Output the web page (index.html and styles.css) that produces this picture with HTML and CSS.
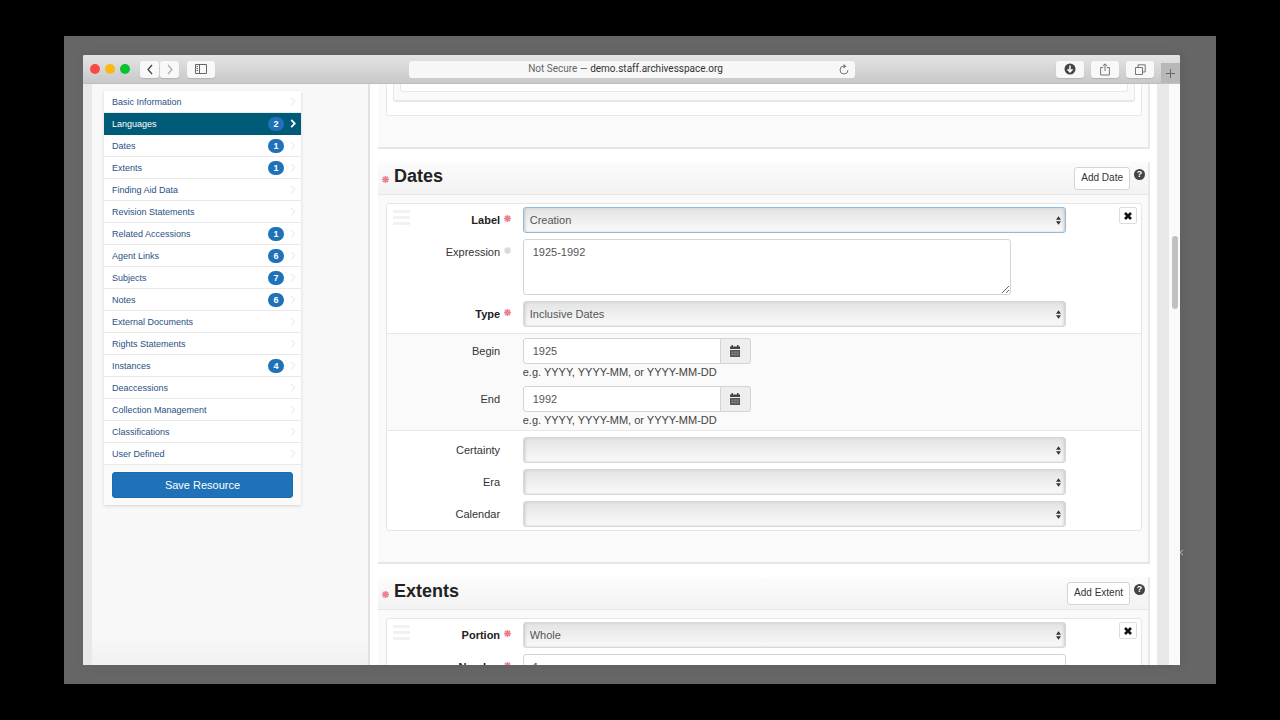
FILE: index.html
```html
<!DOCTYPE html>
<html lang="en">
<head>
    <meta charset="UTF-8">
    <meta name="viewport" content="width=device-width, initial-scale=1.0">
    <title>ArchivesSpace - Edit Resource</title>
    <link rel="stylesheet" href="styles.css">
</head>
<body>
    <!-- shared icons -->
    <svg class="sprite" aria-hidden="true">
        <symbol id="chevron" viewBox="0 0 6 10"><path d="M1 1l4 4-4 4" fill="none" stroke="currentColor"/></symbol>
        <symbol id="required" viewBox="0 0 10 10"><path d="M5 1v8M1 5h8M2.2 2.2l5.6 5.6M7.8 2.2L2.2 7.8" stroke="currentColor" stroke-width="1.8"/></symbol>
        <symbol id="updown" viewBox="0 0 6 10"><path d="M0 4l3-4 3 4zM0 6l3 4 3-4z" fill="currentColor"/></symbol>
        <symbol id="calendar" viewBox="0 0 12 12"><path d="M1 1.5h1.5V0h1.5v1.5h4V0h1.5v1.5H11V4H1z" fill="#444"/><path d="M1 5h10v7H1z" fill="#555"/><path d="M2 7.2h8M2 9.5h8M3.5 6v5M6 6v5M8.5 6v5" stroke="#999" stroke-width=".5"/></symbol>
        <symbol id="remove" viewBox="0 0 10 10"><path d="M2 2l6 6M8 2L2 8" stroke="#111" stroke-width="2.6"/></symbol>
    </svg>

    <div class="desktop">
        <div class="window">
            <header class="toolbar">
                <div class="toolbar-left">
                    <span class="dot red"></span>
                    <span class="dot yellow"></span>
                    <span class="dot green"></span>
                    <button class="tool nav-btn back" aria-label="Back"><svg width="6" height="11" viewBox="0 0 6 11"><path d="M5 1L1 5.500l4 4.500" fill="none" stroke="#444" stroke-width="1.300"/></svg></button>
                    <button class="tool nav-btn" aria-label="Forward"><svg width="6" height="11" viewBox="0 0 6 11"><path d="M1 1l4 4.500L1 10" fill="none" stroke="#aaa" stroke-width="1.200"/></svg></button>
                    <button class="tool side-btn" aria-label="Show sidebar"><svg width="12" height="10" viewBox="0 0 12 10"><path d="M.5.5h11v9H.5zM4.500.5v9M1.500 2.500h1.500M1.500 4.500h1.500M1.500 6.500h1.500" fill="none" stroke="#555" stroke-width=".9"/></svg></button>
                </div>
                <div class="address">
                    <span class="address-text">Not Secure — <b>demo.staff.archivesspace.org</b></span>
                    <svg class="reload" width="10" height="11" viewBox="0 0 10 11"><path d="M5 2a4 4 0 1 0 4 4" fill="none" stroke="#777"/><path d="M4.500 0l3 2.200-3 2.200z" fill="#777"/></svg>
                </div>
                <div class="toolbar-right">
                    <button class="tool" aria-label="Downloads"><svg width="12" height="12" viewBox="0 0 12 12"><circle cx="6" cy="6" r="5.500" fill="#444"/><path d="M6 2.500v6M3.500 6.200L6 8.800l2.500-2.600" fill="none" stroke="#fff" stroke-width="1.500"/></svg></button>
                    <button class="tool" aria-label="Share"><svg width="10" height="13" viewBox="0 0 10 13"><path d="M3.200 4.500H.6V12h8.800V4.500H6.800M5 8V1M2.800 3L5 .8 7.200 3" fill="none" stroke="#666" stroke-width=".9"/></svg></button>
                    <button class="tool" aria-label="Tabs"><svg width="11" height="11" viewBox="0 0 11 11"><path d="M.5 3.500h7v7h-7zM3 3.500V.8h7.200V8H7.500" fill="none" stroke="#666" stroke-width=".9"/></svg></button>
                    <button class="new-tab" aria-label="New tab"><svg width="9" height="9" viewBox="0 0 9 9"><path d="M4.500 0v9M0 4.500h9" stroke="#666"/></svg></button>
                </div>
            </header>

            <div class="page">
                <aside class="sidebar">
                    <nav class="panel">
                        <ul>
                            <li><a href="#">Basic Information<svg class="chev"><use href="#chevron"/></svg></a></li>
                            <li class="active"><a href="#">Languages<span class="badge">2</span><svg class="chev"><use href="#chevron"/></svg></a></li>
                            <li><a href="#">Dates<span class="badge">1</span><svg class="chev"><use href="#chevron"/></svg></a></li>
                            <li><a href="#">Extents<span class="badge">1</span><svg class="chev"><use href="#chevron"/></svg></a></li>
                            <li><a href="#">Finding Aid Data<svg class="chev"><use href="#chevron"/></svg></a></li>
                            <li><a href="#">Revision Statements<svg class="chev"><use href="#chevron"/></svg></a></li>
                            <li><a href="#">Related Accessions<span class="badge">1</span><svg class="chev"><use href="#chevron"/></svg></a></li>
                            <li><a href="#">Agent Links<span class="badge">6</span><svg class="chev"><use href="#chevron"/></svg></a></li>
                            <li><a href="#">Subjects<span class="badge">7</span><svg class="chev"><use href="#chevron"/></svg></a></li>
                            <li><a href="#">Notes<span class="badge">6</span><svg class="chev"><use href="#chevron"/></svg></a></li>
                            <li><a href="#">External Documents<svg class="chev"><use href="#chevron"/></svg></a></li>
                            <li><a href="#">Rights Statements<svg class="chev"><use href="#chevron"/></svg></a></li>
                            <li><a href="#">Instances<span class="badge">4</span><svg class="chev"><use href="#chevron"/></svg></a></li>
                            <li><a href="#">Deaccessions<svg class="chev"><use href="#chevron"/></svg></a></li>
                            <li><a href="#">Collection Management<svg class="chev"><use href="#chevron"/></svg></a></li>
                            <li><a href="#">Classifications<svg class="chev"><use href="#chevron"/></svg></a></li>
                            <li><a href="#">User Defined<svg class="chev"><use href="#chevron"/></svg></a></li>
                        </ul>
                        <div class="save">
                            <button class="btn-primary">Save Resource</button>
                        </div>
                    </nav>
                </aside>

                <main class="content">
                    <!-- end of the languages section -->
                    <section class="section section-end">
                        <div class="nest">
                            <div class="nest nest-grey">
                                <div class="nest nest-inner"></div>
                            </div>
                        </div>
                    </section>

                    <section class="section">
                        <div class="section-head">
                            <svg class="req"><use href="#required"/></svg>
                            <h2>Dates</h2>
                            <button class="btn">Add Date</button>
                            <button class="help" aria-label="Help">?</button>
                        </div>
                        <div class="item">
                            <span class="handle"></span>
                            <button class="remove" aria-label="Remove date"><svg width="10" height="10"><use href="#remove"/></svg></button>
                            <div class="row">
                                <label class="strong" for="date-label">Label</label>
                                <svg class="req"><use href="#required"/></svg>
                                <div class="select focused">
                                    <select id="date-label"><option>Creation</option></select>
                                    <svg class="arrows"><use href="#updown"/></svg>
                                </div>
                            </div>
                            <div class="row">
                                <label for="expression">Expression</label>
                                <svg class="req optional"><use href="#required"/></svg>
                                <textarea id="expression">1925-1992</textarea>
                            </div>
                            <div class="row">
                                <label class="strong" for="date-type">Type</label>
                                <svg class="req"><use href="#required"/></svg>
                                <div class="select">
                                    <select id="date-type"><option>Inclusive Dates</option></select>
                                    <svg class="arrows"><use href="#updown"/></svg>
                                </div>
                            </div>
                            <div class="subgroup">
                                <div class="row">
                                    <label for="begin">Begin</label>
                                    <div class="control">
                                        <div class="date-input">
                                            <input type="text" id="begin" value="1925">
                                            <button aria-label="Pick begin date"><svg width="12" height="12"><use href="#calendar"/></svg></button>
                                        </div>
                                        <p>e.g. YYYY, YYYY-MM, or YYYY-MM-DD</p>
                                    </div>
                                </div>
                                <div class="row">
                                    <label for="end">End</label>
                                    <div class="control">
                                        <div class="date-input">
                                            <input type="text" id="end" value="1992">
                                            <button aria-label="Pick end date"><svg width="12" height="12"><use href="#calendar"/></svg></button>
                                        </div>
                                        <p>e.g. YYYY, YYYY-MM, or YYYY-MM-DD</p>
                                    </div>
                                </div>
                            </div>
                            <div class="row">
                                <label for="certainty">Certainty</label>
                                <div class="select">
                                    <select id="certainty"><option></option></select>
                                    <svg class="arrows"><use href="#updown"/></svg>
                                </div>
                            </div>
                            <div class="row">
                                <label for="era">Era</label>
                                <div class="select">
                                    <select id="era"><option></option></select>
                                    <svg class="arrows"><use href="#updown"/></svg>
                                </div>
                            </div>
                            <div class="row">
                                <label for="cal">Calendar</label>
                                <div class="select">
                                    <select id="cal"><option></option></select>
                                    <svg class="arrows"><use href="#updown"/></svg>
                                </div>
                            </div>
                        </div>
                    </section>

                    <section class="section">
                        <div class="section-head">
                            <svg class="req"><use href="#required"/></svg>
                            <h2>Extents</h2>
                            <button class="btn">Add Extent</button>
                            <button class="help" aria-label="Help">?</button>
                        </div>
                        <div class="item">
                            <span class="handle"></span>
                            <button class="remove" aria-label="Remove extent"><svg width="10" height="10"><use href="#remove"/></svg></button>
                            <div class="row">
                                <label class="strong" for="portion">Portion</label>
                                <svg class="req"><use href="#required"/></svg>
                                <div class="select">
                                    <select id="portion"><option>Whole</option></select>
                                    <svg class="arrows"><use href="#updown"/></svg>
                                </div>
                            </div>
                            <div class="row">
                                <label class="strong" for="number">Number</label>
                                <svg class="req"><use href="#required"/></svg>
                                <input type="text" id="number" value="1">
                            </div>
                        </div>
                    </section>
                </main>

                <div class="scrollbar"><span class="thumb"></span></div>
            </div>
        </div>
        <svg class="edge-mark" width="5" height="7" viewBox="0 0 5 7"><path d="M4 1L1 3.500 4 6" fill="none" stroke="#bbb"/></svg>
    </div>
</body>
</html>
```
FILE: styles.css
```css
* {
    box-sizing: border-box;
}

body {
    margin: 0;
    padding: 36px 64px;
    height: 100vh;
    background: #000;
    color: #333;
    font-family: "Liberation Sans", Arial, sans-serif;
    font-size: 11px;
    line-height: 16px;
}

button, input, select, textarea {
    margin: 0;
    font: inherit;
    color: inherit;
}

svg {
    flex: none;
}

.sprite {
    display: none;
}

.desktop {
    position: relative;
    display: flex;
    height: 100%;
    padding: 19px 36px 19px 19px;
    background: #666;
}

.edge-mark {
    position: absolute;
    right: 32px;
    top: 513px;
}

.window {
    flex: 1;
    display: flex;
    flex-direction: column;
    min-width: 0;
    overflow: hidden;
    border-radius: 2px 2px 0 0;
    background: #fff;
    box-shadow: 2px 0 8px rgba(80, 80, 100, 0.3);
}

/* browser toolbar */
.toolbar {
    flex: none;
    display: grid;
    grid-template-columns: 1fr 446px 1fr;
    align-items: center;
    height: 29px;
    background: linear-gradient(#e4e4e4, #c8c8c8);
    border-bottom: 1px solid #c0c0c0;
}

.toolbar-left, .toolbar-right {
    display: flex;
    align-items: center;
    height: 100%;
}

.toolbar-left {
    padding-left: 7px;
}

.toolbar-right {
    justify-content: flex-end;
    gap: 7px;
}

.dot {
    width: 10px;
    height: 10px;
    margin-right: 5px;
    border-radius: 50%;
}

.red { background: #fb4a43; }
.yellow { background: #fdb912; }
.green { background: #05c52f; }

.tool {
    display: flex;
    align-items: center;
    justify-content: center;
    width: 28px;
    height: 17px;
    padding: 0;
    border: 0;
    border-radius: 3px;
    background: #f8f8f8;
    box-shadow: 0 1px 1px rgba(0, 0, 0, 0.12);
}

.nav-btn {
    width: 19px;
    margin-right: 1px;
}

.back {
    margin-left: 5px;
}

.side-btn {
    margin-left: 7px;
}

.new-tab {
    align-self: flex-end;
    display: flex;
    align-items: center;
    justify-content: center;
    width: 19px;
    height: 20px;
    padding: 0;
    border: 0;
    background: #b8b8b8;
}

.address {
    display: flex;
    align-items: center;
    height: 17px;
    padding: 0 6px 0 4px;
    border-radius: 3px;
    background: #f7f7f7;
    color: #666;
    font-family: Roboto, sans-serif;
    font-size: 10px;
}

.address-text {
    flex: 1;
    text-align: center;
}

.address b {
    font-weight: 400;
    color: #333;
}

/* page */
.page {
    flex: 1;
    display: flex;
    min-height: 0;
}

.sidebar {
    flex: none;
    width: 287px;
    padding: 7px 67px 0 12px;
    border-left: 9px solid #e8e8e8;
    border-right: 2px solid #e2e2e2;
    background: linear-gradient(to top, #f1f1f1, #f8f8f8 30px);
}

.panel {
    background: #fafafa;
    box-shadow: 0 1px 3px rgba(0, 0, 0, 0.15);
}

.panel ul {
    margin: 0;
    padding: 0;
    list-style: none;
    background: #fff;
}

.panel li {
    border-bottom: 1px solid #e9e9e9;
}

.panel a {
    display: flex;
    align-items: center;
    height: 21px;
    padding: 0 5px 0 8px;
    color: #2a5084;
    font-size: 9px;
    text-decoration: none;
}

.badge {
    width: 16px;
    margin-left: auto;
    border-radius: 7px;
    background: #1f72b8;
    color: #fff;
    font-weight: bold;
    line-height: 14px;
    text-align: center;
}

.chev {
    width: 6px;
    height: 9px;
    margin-left: auto;
    color: #ddd;
}

.badge + .chev {
    margin-left: 6px;
}

.panel .active {
    border-color: #005b78;
    background: #005b78;
}

.active a {
    color: #fff;
}

.active .chev {
    color: #fff;
    stroke-width: 2;
}

.save {
    padding: 7px 8px;
}

.btn-primary {
    width: 100%;
    height: 26px;
    padding: 0;
    border: 1px solid #1c6bae;
    border-radius: 3px;
    background: #1f72b8;
    color: #fff;
}

/* sections */
.content {
    flex: 1;
    min-width: 0;
    padding: 0 7px 0 8px;
    overflow: hidden;
    background: #fff;
}

.section {
    margin-bottom: 13px;
    padding-bottom: 31px;
    border-right: 2px solid #e8e8e8;
    border-bottom: 2px solid #e6e6e6;
    background: #fafafa;
}

.section-end {
    padding: 0 6px 31px 8px;
}

.nest {
    padding: 0 6px 13px;
    border: 1px solid #e8e8e8;
    border-top: 0;
    border-radius: 0 0 3px 3px;
    background: #fff;
}

.nest-grey {
    padding-bottom: 8px;
    border-bottom-width: 2px;
    background: #fafafa;
}

.nest-inner {
    height: 8px;
    padding: 0;
}

.section-head {
    display: flex;
    align-items: center;
    height: 33px;
    padding: 0 3px;
    border-bottom: 1px solid #e6e6e6;
    background: linear-gradient(#fcfcfc, #f2f2f2);
}

.section-head h2 {
    flex: 1;
    margin: 0 0 5px 4px;
    color: #222;
    font-size: 18px;
    font-weight: bold;
    line-height: 24px;
}

.req {
    width: 9px;
    height: 9px;
    color: #ee7d90;
}

.optional {
    color: #d8d8d8;
}

.section-head .req {
    margin-top: 2px;
}

.btn {
    height: 23px;
    padding: 0 6px;
    border: 1px solid #d4d4d4;
    border-radius: 3px;
    background: #fff;
    font-size: 10px;
}

.help {
    width: 11px;
    height: 11px;
    margin: 0 0 8px 4px;
    padding: 0;
    border: 0;
    border-radius: 50%;
    background: #444;
    color: #fff;
    font-size: 9px;
    font-weight: bold;
    line-height: 11px;
}

.item {
    position: relative;
    display: flex;
    flex-direction: column;
    gap: 6px;
    margin: 8px 6px 0 8px;
    padding: 3px 0;
    border: 1px solid #e6e6e6;
    border-radius: 3px;
    background: #fff;
}

.row {
    display: grid;
    grid-template-columns: 15% 3% 72%;
    align-items: start;
}

.row label {
    color: #333;
    line-height: 26px;
    text-align: right;
}

.row .strong {
    color: #222;
    font-weight: bold;
}

.row .req {
    margin: 7px 0 0 3px;
}

.row .select, .control {
    grid-column: 3;
}

.select {
    position: relative;
}

.select select {
    appearance: none;
    display: block;
    width: 100%;
    height: 26px;
    padding: 0 6px;
    border: 1px solid #d8d8d8;
    border-radius: 3px;
    background: linear-gradient(#e3e3e3, #fafafa);
    box-shadow: inset 2px 0 3px -1px #c8c8c8, inset -2px 0 3px -1px #c8c8c8;
    color: #555;
}

.select.focused select {
    border-color: #8bbbe2;
}

.arrows {
    position: absolute;
    right: 5px;
    top: 9px;
    width: 5px;
    height: 9px;
    color: #333;
    pointer-events: none;
}

textarea, .row input {
    height: 26px;
    padding: 4px 9px;
    border: 1px solid #d4d4d4;
    border-radius: 3px;
    background: #fff;
    color: #555;
}

textarea {
    display: block;
    width: 90%;
    height: 56px;
}

.date-input {
    display: flex;
    width: 42%;
}

.date-input input {
    flex: 1;
    min-width: 0;
    border-radius: 3px 0 0 3px;
}

.date-input button {
    display: flex;
    align-items: center;
    justify-content: center;
    width: 30px;
    padding: 0;
    border: 1px solid #d4d4d4;
    border-left: 0;
    border-radius: 0 3px 3px 0;
    background: #eee;
}

.control p {
    margin: 0;
    color: #444;
}

.subgroup {
    display: flex;
    flex-direction: column;
    gap: 6px;
    padding: 4px 0 2px;
    border: solid #e8e8e8;
    border-width: 1px 0;
    background: #fafafa;
}

/* controls laid over the top corners of an item */
.handle {
    position: absolute;
    left: 6px;
    top: 6px;
    width: 17px;
    height: 15px;
    background: repeating-linear-gradient(#f2f2f2 0 3px, #fff 3px 6px);
}

.remove {
    position: absolute;
    right: 4px;
    top: 3px;
    display: flex;
    align-items: center;
    justify-content: center;
    width: 18px;
    height: 17px;
    padding: 0;
    border: 1px solid #ddd;
    border-radius: 2px;
    background: #fff;
}

/* scrollbar */
.scrollbar {
    flex: none;
    width: 23px;
    padding: 152px 2px 0 3px;
    border-left: 12px solid #e9e9e9;
    background: #fafafa;
}

.thumb {
    display: block;
    height: 73px;
    border-radius: 3px;
    background: #c1c1c1;
}
```
